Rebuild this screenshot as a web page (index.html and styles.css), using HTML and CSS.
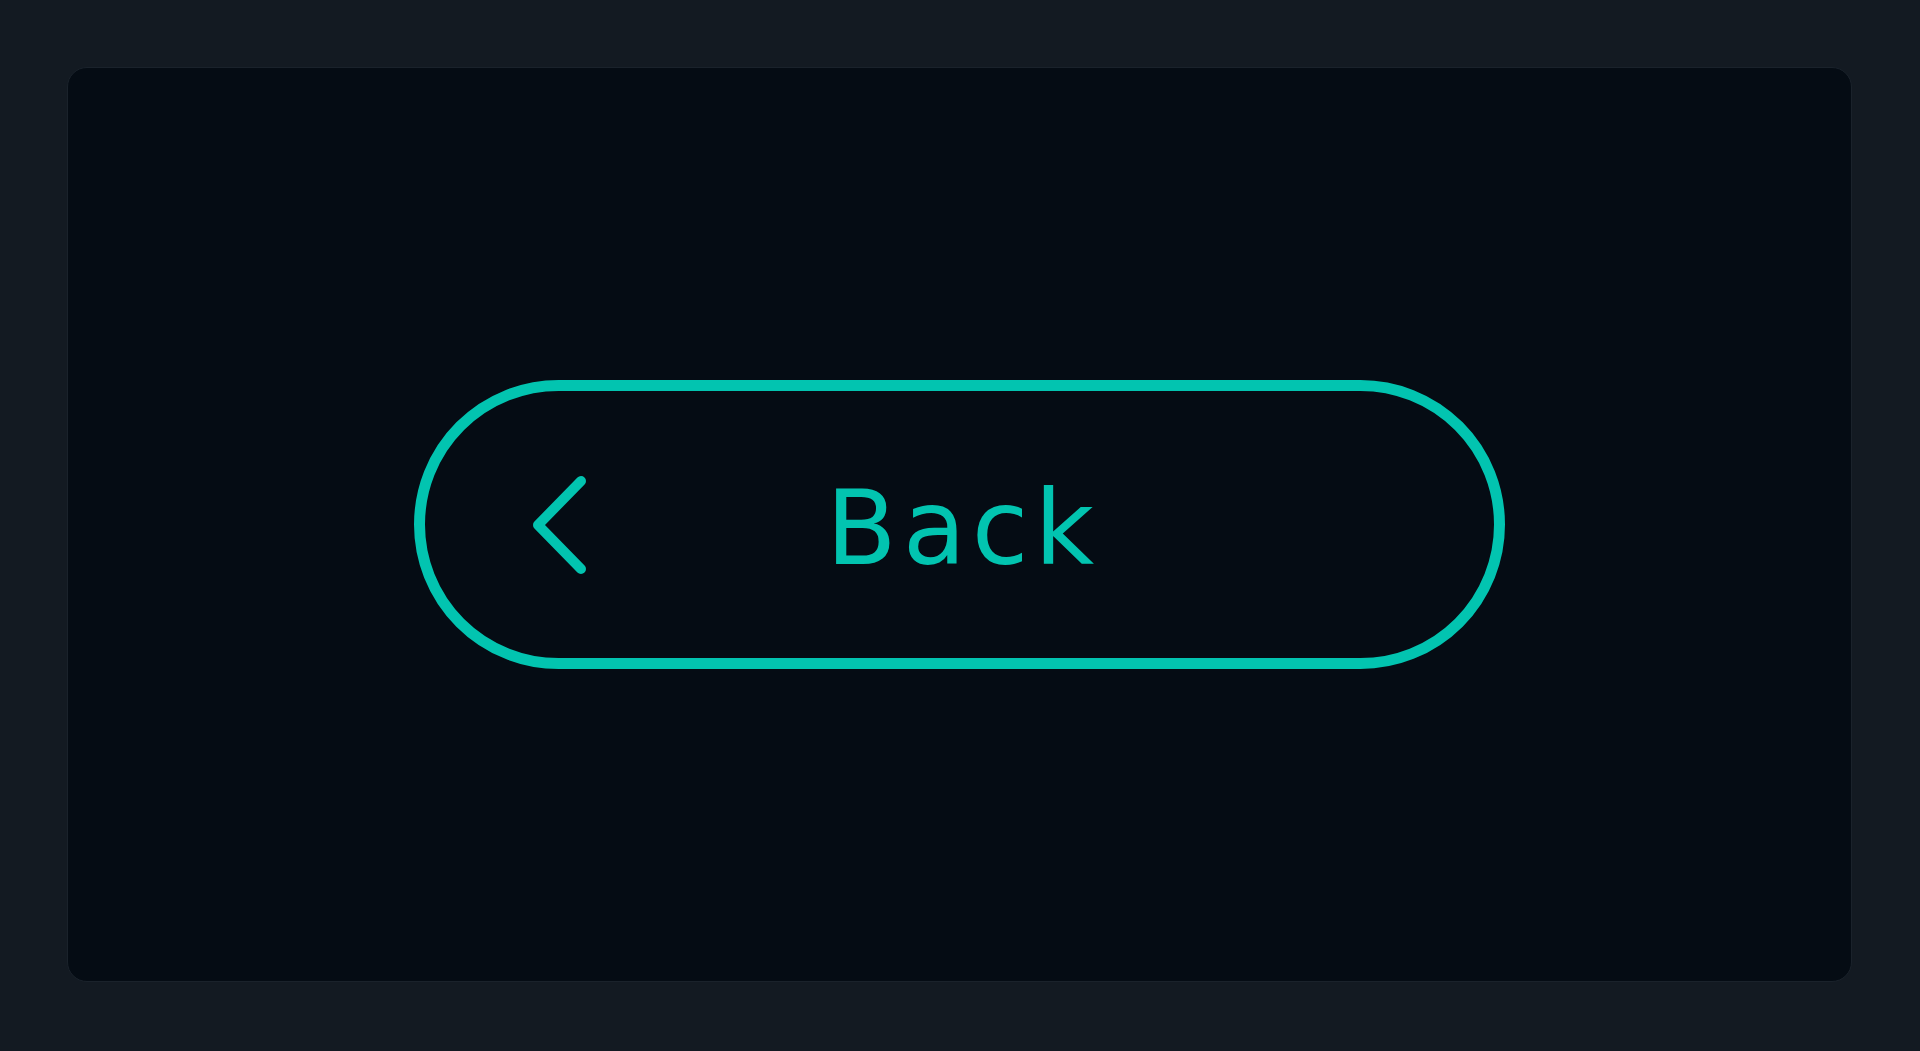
FILE: index.html
```html
<!DOCTYPE html>
<html lang="en">
<head>
<meta charset="utf-8">
<title>Back</title>
<link rel="stylesheet" href="styles.css">
</head>
<body>
  <main class="panel">
    <button class="back-btn" type="button">
      <span class="back-icon">
        <svg width="56" height="100" viewBox="0 0 56 100" aria-hidden="true">
          <polyline points="49,6 6,50 49,94" fill="none" stroke="currentColor" stroke-width="10" stroke-linecap="round" stroke-linejoin="round"/>
        </svg>
      </span>
      <span class="back-label">Back</span>
      <span class="back-spacer"></span>
    </button>
  </main>
</body>
</html>
```
FILE: styles.css
```css
html, body {
  margin: 0;
  height: 100%;
}
body {
  background: #131a22;
  padding: 67px 68px 69px 67px;
  box-sizing: border-box;
  font-family: "DejaVu Sans", "Open Sans", sans-serif;
}
.panel {
  height: 100%;
  box-sizing: border-box;
  background: #050c14;
  border: 1px solid #1a222b;
  border-radius: 20px;
  display: flex;
  align-items: center;
  justify-content: center;
}
.back-btn {
  width: 1091px;
  height: 289px;
  box-sizing: border-box;
  border: 11px solid #02c4b0;
  border-radius: 145px;
  background: transparent;
  color: #02c4b0;
  display: grid;
  grid-template-columns: 1fr auto 1fr;
  align-items: center;
  padding: 0;
  font: inherit;
  cursor: pointer;
}
.back-icon {
  justify-self: start;
  padding-left: 107px;
  display: flex;
}
.back-icon svg {
  display: block;
}
.back-label {
  font-size: 103px;
  font-weight: 400;
  line-height: 1;
  letter-spacing: 6px;
  padding-left: 7px;
  padding-top: 8px;
  color: #02c4b0;
}
```
